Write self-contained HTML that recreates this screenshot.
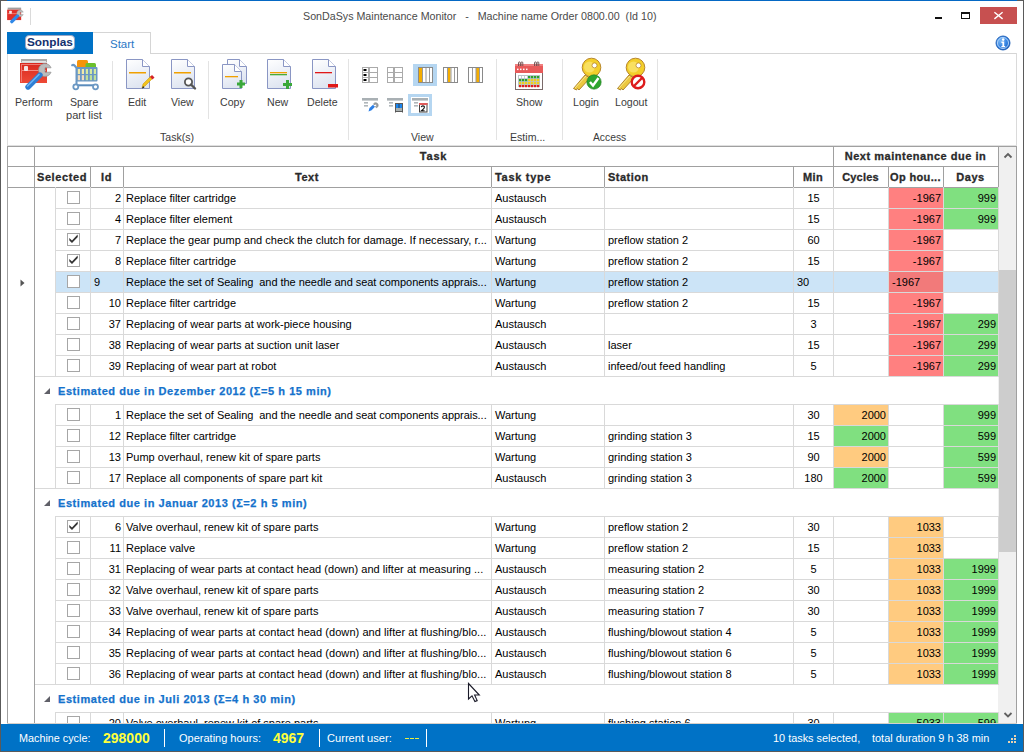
<!DOCTYPE html><html><head><meta charset="utf-8"><style>
html,body{margin:0;padding:0;width:1024px;height:752px;overflow:hidden;background:#fff;}
body{position:relative;font-family:'Liberation Sans',sans-serif;}
div{box-sizing:border-box}
svg{position:absolute;overflow:visible}
</style></head><body>
<div style="position:absolute;left:0px;top:0px;width:1px;height:752px;background:#5a5a5a"></div>
<div style="position:absolute;left:1023px;top:0px;width:1px;height:752px;background:#5a5a5a"></div>
<div style="position:absolute;left:0px;top:0px;width:7px;height:1px;background:#5a5a5a"></div>
<div style="position:absolute;left:7px;top:0px;width:1010px;height:1px;background:#0568c4"></div>
<div style="position:absolute;left:1017px;top:0px;width:7px;height:1px;background:#5a5a5a"></div>
<svg style="left:3.9px;top:5.3px" width="20.8" height="20.8" viewBox="0 0 40 40">
<rect x="7" y="5" width="26" height="4" fill="#a0a0a0"/>
<rect x="6" y="9" width="27" height="20" fill="#e0302a"/>
<rect x="7" y="16" width="25" height="1.5" fill="#f58a80"/>
<rect x="10" y="11" width="5" height="6" rx="1" fill="#f4e4e4"/>
<path d="M37.1 13.8 A6.5 6.5 0 1 0 37.1 18.2 L31 18.2 L31 13.8 Z" fill="#bcbcbc" stroke="#8f8f8f" stroke-width="0.7"/>
<path d="M15 32 L26 21" stroke="#2f88e8" stroke-width="6.5" stroke-linecap="round"/>
</svg>
<div style="position:absolute;left:30px;top:8px;width:1px;height:17px;background:#dadada"></div>
<div style="position:absolute;left:303px;top:6.0px;line-height:20px;font-size:10.7px;font-weight:normal;color:#4a4a4a;white-space:pre;">SonDaSys Maintenance Monitor   -   Machine name Order 0800.00  (Id 10)</div>
<div style="position:absolute;left:935px;top:17px;width:7px;height:2px;background:#111"></div>
<div style="position:absolute;left:961px;top:12px;width:9px;height:7px;border:1px solid #111;border-top-width:2px"></div>
<div style="position:absolute;left:980px;top:7px;width:37px;height:17px;background:#c75050"></div>
<svg style="left:993px;top:11px" width="11" height="10" viewBox="0 0 11 10"><path d="M1.4 1.3 L9.6 7.9 M9.6 1.3 L1.4 7.9" stroke="#fff" stroke-width="1.35"/></svg>
<div style="position:absolute;left:7px;top:32px;width:86px;height:22px;background:#0072c6"></div>
<div style="position:absolute;left:25px;top:35px;width:50px;height:15px;background:#fff;border:1px solid #9aa6c4;border-radius:4px"></div>
<div style="position:absolute;left:27px;top:32.0px;line-height:20px;font-size:11.8px;font-weight:bold;color:#14306e;white-space:pre;">Sonplas</div>
<div style="position:absolute;left:93px;top:32px;width:58px;height:22px;border-top:1px solid #d5d5d5;border-right:1px solid #d5d5d5;background:#fff"></div>
<div style="position:absolute;left:110px;top:34.0px;line-height:20px;font-size:11.5px;font-weight:normal;color:#2b78c6;white-space:pre;">Start</div>
<div style="position:absolute;left:151px;top:53px;width:866px;height:1px;background:#d5d5d5"></div>
<div style="position:absolute;left:7px;top:54px;width:1px;height:92px;background:#dedede"></div>
<div style="position:absolute;left:1016px;top:53px;width:1px;height:93px;background:#dadada"></div>
<div style="position:absolute;left:7px;top:145px;width:1010px;height:1px;background:#e0e0e0"></div>
<svg style="left:995px;top:35px" width="16" height="16" viewBox="0 0 16 16">
<defs><radialGradient id="ig" cx="0.35" cy="0.35" r="0.75"><stop offset="0" stop-color="#7ab8f5"/><stop offset="0.6" stop-color="#2f7fe0"/><stop offset="1" stop-color="#1257b8"/></radialGradient></defs>
<circle cx="8" cy="8" r="7" fill="url(#ig)" stroke="#1d5cb4" stroke-width="0.9"/>
<circle cx="8" cy="8" r="5.5" fill="none" stroke="#c8e4ff" stroke-width="0.9" opacity="0.9"/>
<circle cx="8.2" cy="4.6" r="1.3" fill="#fff"/>
<path d="M6.4 6.6 h2.8 v4.4 h1 v1.3 h-3.8 v-1.3 h1 v-3.1 h-1 z" fill="#fff"/>
</svg>
<svg style="left:14px;top:54px" width="40" height="40" viewBox="0 0 40 40">
<defs><linearGradient id="tb" x1="0" y1="0" x2="0" y2="1"><stop offset="0" stop-color="#d8281f"/><stop offset="1" stop-color="#ee4a36"/></linearGradient></defs>
<rect x="7" y="5" width="26" height="3.5" fill="#a9a9a9"/>
<rect x="8" y="7" width="24" height="1.2" fill="#e4e4e4"/>
<rect x="6" y="9" width="27" height="20" fill="url(#tb)"/>
<rect x="7" y="10" width="25" height="1" fill="#f07a72"/>
<rect x="7" y="16" width="25" height="1" fill="#f58a80"/>
<rect x="7" y="10" width="1" height="18" fill="#f07a72"/>
<rect x="10" y="12" width="4" height="5" rx="1" fill="#f4e4e4"/>
<path d="M37.1 13.8 A6.5 6.5 0 1 0 37.1 18.2 L31 18.2 L31 13.8 Z" fill="#bcbcbc" stroke="#8f8f8f" stroke-width="0.7"/>
<path d="M14 33 L26 21" stroke="#2f7fd4" stroke-width="5.4" stroke-linecap="round"/>
<path d="M13.5 32 L25 20.5" stroke="#6cb4f4" stroke-width="1.6" stroke-linecap="round"/>
</svg>
<div style="position:absolute;left:15px;top:92.0px;line-height:20px;font-size:10.6px;font-weight:normal;color:#3c3c3c;white-space:pre;">Perform</div>
<svg style="left:70px;top:59px" width="30" height="32" viewBox="0 0 30 32">
<rect x="7" y="1" width="11" height="9" rx="1.5" fill="#f7930a"/>
<rect x="15.5" y="4" width="10.5" height="6" rx="1.5" fill="#6cc02c"/>
<path d="M2.2 6.2 Q3.5 5.5 5 7 L6 8.2" fill="none" stroke="#6b98c4" stroke-width="2.2" stroke-linecap="round"/>
<rect x="5.5" y="8" width="22" height="14.5" rx="1" fill="#6b98c4"/>
<g fill="#f3eaa8"><rect x="7.8" y="10" width="2.2" height="5"/><rect x="11.8" y="10" width="2.2" height="5"/></g>
<g fill="#d6eba0"><rect x="15.8" y="10" width="2.2" height="5"/><rect x="19.8" y="10" width="2.2" height="5"/><rect x="23.8" y="10" width="2.2" height="5"/></g>
<g fill="#f0dcc0"><rect x="7.8" y="16.2" width="2.2" height="5"/><rect x="11.8" y="16.2" width="2.2" height="5"/></g>
<g fill="#bfe09a"><rect x="15.8" y="16.2" width="2.2" height="5"/><rect x="19.8" y="16.2" width="2.2" height="5"/><rect x="23.8" y="16.2" width="2.2" height="5"/></g>
<rect x="5.5" y="22" width="2" height="4" fill="#6b98c4"/>
<rect x="5.5" y="25.3" width="20" height="2" fill="#5b8cbc"/>
<circle cx="5.8" cy="27.8" r="2.5" fill="#fff" stroke="#6b98c4" stroke-width="1.8"/>
<circle cx="25.5" cy="27.8" r="2.5" fill="#fff" stroke="#6b98c4" stroke-width="1.8"/>
</svg>
<div style="position:absolute;left:70px;top:92.0px;line-height:20px;font-size:10.6px;font-weight:normal;color:#3c3c3c;white-space:pre;">Spare</div>
<div style="position:absolute;left:66px;top:105.0px;line-height:20px;font-size:11.1px;font-weight:normal;color:#3c3c3c;white-space:pre;">part list</div>
<div style="position:absolute;left:112px;top:61px;width:1px;height:59px;background:#e3e3e3"></div>
<svg style="left:0;top:0" width="1" height="1"><defs><linearGradient id="pg" x1="0" y1="0" x2="0.3" y2="1"><stop offset="0" stop-color="#ffffff"/><stop offset="1" stop-color="#dfe5f1"/></linearGradient></defs></svg>
<svg style="left:0;top:0" width="1024" height="100"><path d="M126.5 59.5 h16 l7 7 v22 h-23 z" fill="url(#pg)" stroke="#8a96c4" stroke-width="1"/>
<path d="M142.5 59.5 v7 h7" fill="#fff" stroke="#8a96c4" stroke-width="1"/><rect x="129" y="72" width="17" height="1.5" fill="#f0a000"/><path d="M142 88 L143 84 L151 76 L153 78 L145 86 z" fill="#f2c21c" stroke="#c89400" stroke-width="0.5"/><path d="M150 77 L152 75 L154.5 77.5 L152.5 79.5 z" fill="#d5222a"/><path d="M142 88.5 L143 86 L144.5 87.5 z" fill="#222"/><path d="M171.5 59.5 h16 l7 7 v22 h-23 z" fill="url(#pg)" stroke="#8a96c4" stroke-width="1"/>
<path d="M187.5 59.5 v7 h7" fill="#fff" stroke="#8a96c4" stroke-width="1"/><rect x="174" y="72" width="17" height="1.5" fill="#f0a000"/><circle cx="188.5" cy="82" r="3.6" fill="#fff" stroke="#555" stroke-width="1.8"/><path d="M191 84.5 L195 88.5" stroke="#555" stroke-width="2.4" stroke-linecap="round"/><path d="M227.5 59.5 h12 l7 7 v17 h-19 z" fill="url(#pg)" stroke="#8a96c4" stroke-width="1"/>
<path d="M239.5 59.5 v7 h7" fill="#fff" stroke="#8a96c4" stroke-width="1"/><path d="M222.5 64.5 h12 l7 7 v17 h-19 z" fill="url(#pg)" stroke="#8a96c4" stroke-width="1"/>
<path d="M234.5 64.5 v7 h7" fill="#fff" stroke="#8a96c4" stroke-width="1"/><rect x="225" y="76" width="13" height="1.3" fill="#f0a000"/><path d="M241 80 v8 M237 84 h8" stroke="#3aa83a" stroke-width="3"/><path d="M267.5 59.5 h16 l7 7 v22 h-23 z" fill="url(#pg)" stroke="#8a96c4" stroke-width="1"/>
<path d="M283.5 59.5 v7 h7" fill="#fff" stroke="#8a96c4" stroke-width="1"/><rect x="270" y="72" width="17" height="1.3" fill="#f0a000"/><rect x="270" y="74" width="17" height="1.3" fill="#48ab3a"/><path d="M287.5 80 v9 M283 84.5 h9" stroke="#3aa83a" stroke-width="3"/><path d="M312.5 59.5 h16 l7 7 v22 h-23 z" fill="url(#pg)" stroke="#8a96c4" stroke-width="1"/>
<path d="M328.5 59.5 v7 h7" fill="#fff" stroke="#8a96c4" stroke-width="1"/><rect x="315" y="72" width="17" height="1.3" fill="#e01818"/><rect x="328" y="84" width="10" height="3.5" fill="#e01818"/></svg>
<div style="position:absolute;left:128px;top:92.0px;line-height:20px;font-size:10.6px;font-weight:normal;color:#3c3c3c;white-space:pre;">Edit</div>
<div style="position:absolute;left:171px;top:92.0px;line-height:20px;font-size:10.6px;font-weight:normal;color:#3c3c3c;white-space:pre;">View</div>
<div style="position:absolute;left:208px;top:61px;width:1px;height:58px;background:#e3e3e3"></div>
<div style="position:absolute;left:220px;top:92.0px;line-height:20px;font-size:10.6px;font-weight:normal;color:#3c3c3c;white-space:pre;">Copy</div>
<div style="position:absolute;left:267px;top:92.0px;line-height:20px;font-size:10.6px;font-weight:normal;color:#3c3c3c;white-space:pre;">New</div>
<div style="position:absolute;left:307px;top:92.0px;line-height:20px;font-size:10.6px;font-weight:normal;color:#3c3c3c;white-space:pre;">Delete</div>
<div style="position:absolute;left:160px;top:127.0px;line-height:20px;font-size:10.6px;font-weight:normal;color:#3c3c3c;white-space:pre;">Task(s)</div>
<div style="position:absolute;left:348px;top:59px;width:1px;height:81px;background:#e3e3e3"></div>
<svg style="left:0;top:0" width="1024" height="130"><rect x="413" y="64" width="24" height="22" fill="#b5d6f1"/><rect x="408" y="94" width="24" height="22" fill="#b5d6f1"/><rect x="362.5" y="67.5" width="6" height="5" fill="#fff" stroke="#aaa" stroke-width="1"/><rect x="369.5" y="67.5" width="8" height="5" fill="#fff" stroke="#aaa" stroke-width="1"/><rect x="363.5" y="69" width="3" height="2" fill="#000"/><rect x="362.5" y="72.5" width="6" height="5" fill="#fff" stroke="#aaa" stroke-width="1"/><rect x="369.5" y="72.5" width="8" height="5" fill="#fff" stroke="#aaa" stroke-width="1"/><rect x="363.5" y="74" width="3" height="2" fill="#000"/><rect x="362.5" y="77.5" width="6" height="5" fill="#fff" stroke="#aaa" stroke-width="1"/><rect x="369.5" y="77.5" width="8" height="5" fill="#fff" stroke="#aaa" stroke-width="1"/><rect x="363.5" y="79" width="3" height="2" fill="#000"/><rect x="387.5" y="67.5" width="6" height="5" fill="#fff" stroke="#aaa" stroke-width="1"/><rect x="394.5" y="67.5" width="8" height="5" fill="#fff" stroke="#aaa" stroke-width="1"/><rect x="387.5" y="72.5" width="6" height="5" fill="#fff" stroke="#aaa" stroke-width="1"/><rect x="394.5" y="72.5" width="8" height="5" fill="#fff" stroke="#aaa" stroke-width="1"/><rect x="387.5" y="77.5" width="6" height="5" fill="#fff" stroke="#aaa" stroke-width="1"/><rect x="394.5" y="77.5" width="8" height="5" fill="#fff" stroke="#aaa" stroke-width="1"/><rect x="418.5" y="67.5" width="14" height="15" fill="#fff" stroke="#8a8a8a" stroke-width="1"/><rect x="419" y="68" width="3" height="14" fill="#f5ad00"/><rect x="422.0" y="68" width="1" height="14" fill="#9a9a9a"/><rect x="425.5" y="68" width="1" height="14" fill="#9a9a9a"/><rect x="429.0" y="68" width="1" height="14" fill="#9a9a9a"/><rect x="443.5" y="67.5" width="14" height="15" fill="#fff" stroke="#8a8a8a" stroke-width="1"/><rect x="447.5" y="68" width="3" height="14" fill="#f5ad00"/><rect x="447.0" y="68" width="1" height="14" fill="#9a9a9a"/><rect x="450.5" y="68" width="1" height="14" fill="#9a9a9a"/><rect x="454.0" y="68" width="1" height="14" fill="#9a9a9a"/><rect x="468.5" y="67.5" width="14" height="15" fill="#fff" stroke="#8a8a8a" stroke-width="1"/><rect x="476" y="68" width="3" height="14" fill="#f5ad00"/><rect x="472.0" y="68" width="1" height="14" fill="#9a9a9a"/><rect x="475.5" y="68" width="1" height="14" fill="#9a9a9a"/><rect x="479.0" y="68" width="1" height="14" fill="#9a9a9a"/><rect x="362" y="98" width="16" height="2.6" fill="#a9b0b4"/><rect x="364" y="102" width="4" height="1.6" fill="#b0b6ba"/><rect x="364" y="105" width="4" height="1.6" fill="#b0b6ba"/><path d="M368.5 111.5 L369.5 108 L373 104.8 L375 106.8 L371.6 110.2 z" fill="#2b7fe6"/><path d="M373.5 103.8 a2.6 2.6 0 1 1 2.8 4 l-1 -1.2 a1.2 1.2 0 1 0 -1 -1.6 z" fill="#9aa0a4" stroke="#777" stroke-width="0.5"/><rect x="387" y="98" width="16" height="2.6" fill="#a9b0b4"/><rect x="389" y="102" width="4" height="1.6" fill="#b0b6ba"/><rect x="389" y="105" width="4" height="1.6" fill="#b0b6ba"/><rect x="395.5" y="103.5" width="7" height="8" fill="#a8b0b0" stroke="#5a5a5a" stroke-width="1"/><rect x="396" y="104" width="6" height="4" fill="#1a86f0"/><rect x="398.6" y="104" width="0.8" height="4" fill="#333"/><rect x="395" y="111" width="1" height="1.5" fill="#555"/><rect x="402" y="111" width="1" height="1.5" fill="#555"/><rect x="411" y="97" width="18" height="16" fill="#fff"/><rect x="412" y="98" width="16" height="2.6" fill="#a9b0b4"/><rect x="414" y="102" width="4" height="1.6" fill="#b0b6ba"/><rect x="414" y="105" width="4" height="1.6" fill="#b0b6ba"/><rect x="419.5" y="103.5" width="7.5" height="8.5" fill="#fff" stroke="#444" stroke-width="1"/><rect x="419" y="103" width="8.5" height="2" fill="#e05a5a"/><path d="M421.3 107.2 q0.2 -1.3 1.6 -1.3 q1.6 0 1.5 1.4 q-0.1 0.9 -1.4 2 l-1.6 1.5 h3.2" fill="none" stroke="#111" stroke-width="1.1"/></svg>
<div style="position:absolute;left:411px;top:127.0px;line-height:20px;font-size:10.6px;font-weight:normal;color:#3c3c3c;white-space:pre;">View</div>
<div style="position:absolute;left:496px;top:59px;width:1px;height:81px;background:#e3e3e3"></div>
<svg style="left:514px;top:60px" width="30" height="31" viewBox="0 0 30 31"><rect x="1.5" y="4.5" width="27" height="25" fill="#fff" stroke="#7a6a6a" stroke-width="1"/><rect x="1" y="4" width="28" height="9" fill="#e85a5a"/><rect x="1" y="4" width="28" height="2" fill="#f08080"/><g fill="none" stroke="#6a4a4a" stroke-width="0.9"><path d="M4.5 6 v-3.2 a0.9 0.9 0 0 1 1.8 0 v3.2"/><path d="M7 6 v-3.2 a0.9 0.9 0 0 1 1.8 0 v3.2"/><path d="M20.5 6 v-3.2 a0.9 0.9 0 0 1 1.8 0 v3.2"/><path d="M23 6 v-3.2 a0.9 0.9 0 0 1 1.8 0 v3.2"/></g><g fill="#fff"><rect x="3" y="8.6" width="1.5" height="1.5"/><rect x="6" y="8.6" width="1.5" height="1.5"/><rect x="9" y="8.6" width="1.5" height="1.5"/><rect x="12" y="8.6" width="1.5" height="1.5"/></g><rect x="4" y="15" width="22" height="12" fill="#b9c4c8"/><rect x="5" y="16" width="2.2" height="2.2" fill="#ffffff"/><rect x="8" y="16" width="2.2" height="2.2" fill="#ffffff"/><rect x="11" y="16" width="2.2" height="2.2" fill="#ffffff"/><rect x="14" y="16" width="2.2" height="2.2" fill="#2ba12b"/><rect x="17" y="16" width="2.2" height="2.2" fill="#2ba12b"/><rect x="20" y="16" width="2.2" height="2.2" fill="#2ba12b"/><rect x="23" y="16" width="2.2" height="2.2" fill="#2ba12b"/><rect x="5" y="19" width="2.2" height="2.2" fill="#2ba12b"/><rect x="8" y="19" width="2.2" height="2.2" fill="#2ba12b"/><rect x="11" y="19" width="2.2" height="2.2" fill="#2ba12b"/><rect x="14" y="19" width="2.2" height="2.2" fill="#f2d01a"/><rect x="17" y="19" width="2.2" height="2.2" fill="#f2d01a"/><rect x="20" y="19" width="2.2" height="2.2" fill="#f2d01a"/><rect x="23" y="19" width="2.2" height="2.2" fill="#f2d01a"/><rect x="5" y="22" width="2.2" height="2.2" fill="#f2d01a"/><rect x="8" y="22" width="2.2" height="2.2" fill="#f2d01a"/><rect x="11" y="22" width="2.2" height="2.2" fill="#f2d01a"/><rect x="14" y="22" width="2.2" height="2.2" fill="#f2d01a"/><rect x="17" y="22" width="2.2" height="2.2" fill="#f2d01a"/><rect x="20" y="22" width="2.2" height="2.2" fill="#f2d01a"/><rect x="23" y="22" width="2.2" height="2.2" fill="#f2d01a"/><rect x="5" y="25" width="2.2" height="2.2" fill="#e21c1c"/><rect x="8" y="25" width="2.2" height="2.2" fill="#e21c1c"/><rect x="11" y="25" width="2.2" height="2.2" fill="#e21c1c"/><rect x="14" y="25" width="2.2" height="2.2" fill="#e21c1c"/><rect x="17" y="25" width="2.2" height="2.2" fill="#e21c1c"/><rect x="20" y="25" width="2.2" height="2.2" fill="#e21c1c"/><rect x="23" y="25" width="2.2" height="2.2" fill="#e21c1c"/></svg>
<div style="position:absolute;left:516px;top:92.0px;line-height:20px;font-size:10.6px;font-weight:normal;color:#3c3c3c;white-space:pre;">Show</div>
<div style="position:absolute;left:510px;top:127.0px;line-height:20px;font-size:10.6px;font-weight:normal;color:#3c3c3c;white-space:pre;">Estim...</div>
<div style="position:absolute;left:562px;top:59px;width:1px;height:81px;background:#e3e3e3"></div>
<svg style="left:571px;top:58px" width="34" height="34" viewBox="0 0 34 34"><path d="M2.5 30.5 L14 17 L19 20 L8 32 L6.5 30.5 L5.5 32 z" fill="#ecc840" stroke="#a87a22" stroke-width="0.9"/><path d="M4 30 L15 18" stroke="#f8e890" stroke-width="1"/><circle cx="20.5" cy="9.5" r="9.3" fill="#f3cf2a" stroke="#b8862a" stroke-width="1"/><circle cx="18.5" cy="9" r="5.5" fill="#f9e060"/><circle cx="23.5" cy="7.4" r="2.5" fill="#fff" stroke="#b8862a" stroke-width="0.8"/><circle cx="23" cy="24" r="7.2" fill="#2ea52e" stroke="#1e7a1e" stroke-width="0.6"/><path d="M19 24 L22 27.5 L27.5 20" fill="none" stroke="#fff" stroke-width="2.4"/></svg>
<svg style="left:615px;top:58px" width="34" height="34" viewBox="0 0 34 34"><path d="M2.5 30.5 L14 17 L19 20 L8 32 L6.5 30.5 L5.5 32 z" fill="#ecc840" stroke="#a87a22" stroke-width="0.9"/><path d="M4 30 L15 18" stroke="#f8e890" stroke-width="1"/><circle cx="20.5" cy="9.5" r="9.3" fill="#f3cf2a" stroke="#b8862a" stroke-width="1"/><circle cx="18.5" cy="9" r="5.5" fill="#f9e060"/><circle cx="23.5" cy="7.4" r="2.5" fill="#fff" stroke="#b8862a" stroke-width="0.8"/><circle cx="23" cy="24" r="6.3" fill="#fff" stroke="#dd1c1c" stroke-width="2.4"/><path d="M19 28 L27 20" stroke="#dd1c1c" stroke-width="2.4"/></svg>
<div style="position:absolute;left:573px;top:92.0px;line-height:20px;font-size:10.6px;font-weight:normal;color:#3c3c3c;white-space:pre;">Login</div>
<div style="position:absolute;left:615px;top:92.0px;line-height:20px;font-size:10.6px;font-weight:normal;color:#3c3c3c;white-space:pre;">Logout</div>
<div style="position:absolute;left:593px;top:127.5px;line-height:20px;font-size:10.3px;font-weight:normal;color:#3c3c3c;white-space:pre;">Access</div>
<div style="position:absolute;left:657px;top:59px;width:1px;height:81px;background:#e3e3e3"></div>
<div style="position:absolute;left:998px;top:146px;width:19px;height:578px;background:#f0f0f0"></div>
<div style="position:absolute;left:999px;top:270px;width:17px;height:282px;background:#cdcdcd"></div>
<div style="position:absolute;left:1016px;top:146px;width:1px;height:578px;background:#a0a0a0"></div>
<svg style="left:1003px;top:151px" width="10" height="8" viewBox="0 0 10 8"><path d="M1.5 6.5 L5 3 L8.5 6.5" fill="none" stroke="#606060" stroke-width="1.8"/></svg>
<svg style="left:1003px;top:711px" width="10" height="8" viewBox="0 0 10 8"><path d="M1.5 2 L5 5.5 L8.5 2" fill="none" stroke="#606060" stroke-width="1.8"/></svg>
<div style="position:absolute;left:7px;top:146px;width:1010px;height:1px;background:#a0a0a0"></div>
<div style="position:absolute;left:7px;top:166px;width:992px;height:1px;background:#a0a0a0"></div>
<div style="position:absolute;left:7px;top:187px;width:992px;height:1px;background:#a0a0a0"></div>
<div style="position:absolute;left:7px;top:146px;width:1px;height:578px;background:#a0a0a0"></div>
<div style="position:absolute;left:34px;top:146px;width:1px;height:578px;background:#a0a0a0"></div>
<div style="position:absolute;left:833px;top:146px;width:1px;height:42px;background:#a0a0a0"></div>
<div style="position:absolute;left:998px;top:146px;width:1px;height:42px;background:#a0a0a0"></div>
<div style="position:absolute;left:90px;top:166px;width:1px;height:22px;background:#a0a0a0"></div>
<div style="position:absolute;left:123px;top:166px;width:1px;height:22px;background:#a0a0a0"></div>
<div style="position:absolute;left:491px;top:166px;width:1px;height:22px;background:#a0a0a0"></div>
<div style="position:absolute;left:604px;top:166px;width:1px;height:22px;background:#a0a0a0"></div>
<div style="position:absolute;left:793px;top:166px;width:1px;height:22px;background:#a0a0a0"></div>
<div style="position:absolute;left:888px;top:166px;width:1px;height:22px;background:#a0a0a0"></div>
<div style="position:absolute;left:943px;top:166px;width:1px;height:22px;background:#a0a0a0"></div>
<div style="position:absolute;left:34px;top:146.0px;width:799px;text-align:center;line-height:20px;font-size:11px;font-weight:bold;color:#2a2a2a;white-space:pre;letter-spacing:0.75px;-webkit-text-stroke:0.3px #2a2a2a">Task</div>
<div style="position:absolute;left:833px;top:146.0px;width:165px;text-align:center;line-height:20px;font-size:11px;font-weight:bold;color:#2a2a2a;white-space:pre;letter-spacing:0.52px;-webkit-text-stroke:0.3px #2a2a2a">Next maintenance due in</div>
<div style="position:absolute;left:34px;top:167.0px;width:56px;text-align:center;line-height:20px;font-size:11px;font-weight:bold;color:#2a2a2a;white-space:pre;letter-spacing:0.6px;-webkit-text-stroke:0.3px #2a2a2a">Selected</div>
<div style="position:absolute;left:90px;top:167.0px;width:33px;text-align:center;line-height:20px;font-size:11px;font-weight:bold;color:#2a2a2a;white-space:pre;letter-spacing:0.5px;-webkit-text-stroke:0.3px #2a2a2a">Id</div>
<div style="position:absolute;left:123px;top:167.0px;width:368px;text-align:center;line-height:20px;font-size:11px;font-weight:bold;color:#2a2a2a;white-space:pre;letter-spacing:0.5px;-webkit-text-stroke:0.3px #2a2a2a">Text</div>
<div style="position:absolute;left:495px;top:167.0px;line-height:20px;font-size:11px;font-weight:bold;color:#2a2a2a;white-space:pre;letter-spacing:0.7px;-webkit-text-stroke:0.3px #2a2a2a">Task type</div>
<div style="position:absolute;left:608px;top:167.0px;line-height:20px;font-size:11px;font-weight:bold;color:#2a2a2a;white-space:pre;letter-spacing:0.5px;-webkit-text-stroke:0.3px #2a2a2a">Station</div>
<div style="position:absolute;left:793px;top:167.0px;width:40px;text-align:center;line-height:20px;font-size:11px;font-weight:bold;color:#2a2a2a;white-space:pre;letter-spacing:0.3px;-webkit-text-stroke:0.3px #2a2a2a">Min</div>
<div style="position:absolute;left:833px;top:167.0px;width:55px;text-align:center;line-height:20px;font-size:11px;font-weight:bold;color:#2a2a2a;white-space:pre;letter-spacing:0.2px;-webkit-text-stroke:0.3px #2a2a2a">Cycles</div>
<div style="position:absolute;left:888px;top:167.0px;width:55px;text-align:center;line-height:20px;font-size:11px;font-weight:bold;color:#2a2a2a;white-space:pre;letter-spacing:0.35px;-webkit-text-stroke:0.3px #2a2a2a">Op hou...</div>
<div style="position:absolute;left:943px;top:167.0px;width:55px;text-align:center;line-height:20px;font-size:11px;font-weight:bold;color:#2a2a2a;white-space:pre;letter-spacing:0.5px;-webkit-text-stroke:0.3px #2a2a2a">Days</div>
<div style="position:absolute;left:0;top:0;width:1024px;height:723px;overflow:hidden">
<div style="position:absolute;left:889px;top:188px;width:54px;height:20px;background:#ff8080"></div>
<div style="position:absolute;left:944px;top:188px;width:54px;height:20px;background:#80e080"></div>
<div style="position:absolute;left:55px;top:187px;width:1px;height:22px;background:#d9d9d9"></div>
<div style="position:absolute;left:90px;top:187px;width:1px;height:22px;background:#d9d9d9"></div>
<div style="position:absolute;left:123px;top:187px;width:1px;height:22px;background:#d9d9d9"></div>
<div style="position:absolute;left:491px;top:187px;width:1px;height:22px;background:#d9d9d9"></div>
<div style="position:absolute;left:604px;top:187px;width:1px;height:22px;background:#d9d9d9"></div>
<div style="position:absolute;left:793px;top:187px;width:1px;height:22px;background:#d9d9d9"></div>
<div style="position:absolute;left:833px;top:187px;width:1px;height:22px;background:#d9d9d9"></div>
<div style="position:absolute;left:888px;top:187px;width:1px;height:22px;background:#d9d9d9"></div>
<div style="position:absolute;left:943px;top:187px;width:1px;height:22px;background:#d9d9d9"></div>
<div style="position:absolute;left:998px;top:187px;width:1px;height:22px;background:#d9d9d9"></div>
<div style="position:absolute;left:55px;top:208px;width:944px;height:1px;background:#d9d9d9"></div>
<div style="position:absolute;left:67px;top:191px;width:13px;height:13px;background:#fff;border:1px solid #a6a6a6"></div>
<div style="position:absolute;left:90px;top:188.0px;width:31px;text-align:right;line-height:20px;font-size:11px;font-weight:normal;color:#000000;white-space:pre;">2</div>
<div style="position:absolute;left:793px;top:188.0px;width:41px;text-align:center;line-height:20px;font-size:11px;font-weight:normal;color:#000000;white-space:pre;">15</div>
<div style="position:absolute;left:888px;top:188.0px;width:53px;text-align:right;line-height:20px;font-size:11px;font-weight:normal;color:#000000;white-space:pre;">-1967</div>
<div style="position:absolute;left:126px;top:188.0px;line-height:20px;font-size:11px;font-weight:normal;color:#000000;white-space:pre;">Replace filter cartridge</div>
<div style="position:absolute;left:495px;top:188.0px;line-height:20px;font-size:11px;font-weight:normal;color:#000000;white-space:pre;">Austausch</div>
<div style="position:absolute;left:608px;top:188.0px;line-height:20px;font-size:11px;font-weight:normal;color:#000000;white-space:pre;"></div>
<div style="position:absolute;left:943px;top:188.0px;width:53px;text-align:right;line-height:20px;font-size:11px;font-weight:normal;color:#000000;white-space:pre;">999</div>
<div style="position:absolute;left:889px;top:209px;width:54px;height:20px;background:#ff8080"></div>
<div style="position:absolute;left:944px;top:209px;width:54px;height:20px;background:#80e080"></div>
<div style="position:absolute;left:55px;top:208px;width:1px;height:22px;background:#d9d9d9"></div>
<div style="position:absolute;left:90px;top:208px;width:1px;height:22px;background:#d9d9d9"></div>
<div style="position:absolute;left:123px;top:208px;width:1px;height:22px;background:#d9d9d9"></div>
<div style="position:absolute;left:491px;top:208px;width:1px;height:22px;background:#d9d9d9"></div>
<div style="position:absolute;left:604px;top:208px;width:1px;height:22px;background:#d9d9d9"></div>
<div style="position:absolute;left:793px;top:208px;width:1px;height:22px;background:#d9d9d9"></div>
<div style="position:absolute;left:833px;top:208px;width:1px;height:22px;background:#d9d9d9"></div>
<div style="position:absolute;left:888px;top:208px;width:1px;height:22px;background:#d9d9d9"></div>
<div style="position:absolute;left:943px;top:208px;width:1px;height:22px;background:#d9d9d9"></div>
<div style="position:absolute;left:998px;top:208px;width:1px;height:22px;background:#d9d9d9"></div>
<div style="position:absolute;left:55px;top:229px;width:944px;height:1px;background:#d9d9d9"></div>
<div style="position:absolute;left:67px;top:212px;width:13px;height:13px;background:#fff;border:1px solid #a6a6a6"></div>
<div style="position:absolute;left:90px;top:209.0px;width:31px;text-align:right;line-height:20px;font-size:11px;font-weight:normal;color:#000000;white-space:pre;">4</div>
<div style="position:absolute;left:793px;top:209.0px;width:41px;text-align:center;line-height:20px;font-size:11px;font-weight:normal;color:#000000;white-space:pre;">15</div>
<div style="position:absolute;left:888px;top:209.0px;width:53px;text-align:right;line-height:20px;font-size:11px;font-weight:normal;color:#000000;white-space:pre;">-1967</div>
<div style="position:absolute;left:126px;top:209.0px;line-height:20px;font-size:11px;font-weight:normal;color:#000000;white-space:pre;">Replace filter element</div>
<div style="position:absolute;left:495px;top:209.0px;line-height:20px;font-size:11px;font-weight:normal;color:#000000;white-space:pre;">Austausch</div>
<div style="position:absolute;left:608px;top:209.0px;line-height:20px;font-size:11px;font-weight:normal;color:#000000;white-space:pre;"></div>
<div style="position:absolute;left:943px;top:209.0px;width:53px;text-align:right;line-height:20px;font-size:11px;font-weight:normal;color:#000000;white-space:pre;">999</div>
<div style="position:absolute;left:889px;top:230px;width:54px;height:20px;background:#ff8080"></div>
<div style="position:absolute;left:55px;top:229px;width:1px;height:22px;background:#d9d9d9"></div>
<div style="position:absolute;left:90px;top:229px;width:1px;height:22px;background:#d9d9d9"></div>
<div style="position:absolute;left:123px;top:229px;width:1px;height:22px;background:#d9d9d9"></div>
<div style="position:absolute;left:491px;top:229px;width:1px;height:22px;background:#d9d9d9"></div>
<div style="position:absolute;left:604px;top:229px;width:1px;height:22px;background:#d9d9d9"></div>
<div style="position:absolute;left:793px;top:229px;width:1px;height:22px;background:#d9d9d9"></div>
<div style="position:absolute;left:833px;top:229px;width:1px;height:22px;background:#d9d9d9"></div>
<div style="position:absolute;left:888px;top:229px;width:1px;height:22px;background:#d9d9d9"></div>
<div style="position:absolute;left:943px;top:229px;width:1px;height:22px;background:#d9d9d9"></div>
<div style="position:absolute;left:998px;top:229px;width:1px;height:22px;background:#d9d9d9"></div>
<div style="position:absolute;left:55px;top:250px;width:944px;height:1px;background:#d9d9d9"></div>
<div style="position:absolute;left:67px;top:233px;width:13px;height:13px;background:#fff;border:1px solid #a6a6a6"></div>
<svg style="left:67px;top:233px" width="13" height="13" viewBox="0 0 13 13"><path d="M2.2 5 L2.4 7.6 L5 10 L10.8 4 L10.6 1.6 L5 7.4 z" fill="#333"/></svg>
<div style="position:absolute;left:90px;top:230.0px;width:31px;text-align:right;line-height:20px;font-size:11px;font-weight:normal;color:#000000;white-space:pre;">7</div>
<div style="position:absolute;left:793px;top:230.0px;width:41px;text-align:center;line-height:20px;font-size:11px;font-weight:normal;color:#000000;white-space:pre;">60</div>
<div style="position:absolute;left:888px;top:230.0px;width:53px;text-align:right;line-height:20px;font-size:11px;font-weight:normal;color:#000000;white-space:pre;">-1967</div>
<div style="position:absolute;left:126px;top:230.0px;line-height:20px;font-size:11px;font-weight:normal;color:#000000;white-space:pre;letter-spacing:0.02px">Replace the gear pump and check the clutch for damage. If necessary, r...</div>
<div style="position:absolute;left:495px;top:230.0px;line-height:20px;font-size:11px;font-weight:normal;color:#000000;white-space:pre;">Wartung</div>
<div style="position:absolute;left:608px;top:230.0px;line-height:20px;font-size:11px;font-weight:normal;color:#000000;white-space:pre;">preflow station 2</div>
<div style="position:absolute;left:889px;top:251px;width:54px;height:20px;background:#ff8080"></div>
<div style="position:absolute;left:55px;top:250px;width:1px;height:22px;background:#d9d9d9"></div>
<div style="position:absolute;left:90px;top:250px;width:1px;height:22px;background:#d9d9d9"></div>
<div style="position:absolute;left:123px;top:250px;width:1px;height:22px;background:#d9d9d9"></div>
<div style="position:absolute;left:491px;top:250px;width:1px;height:22px;background:#d9d9d9"></div>
<div style="position:absolute;left:604px;top:250px;width:1px;height:22px;background:#d9d9d9"></div>
<div style="position:absolute;left:793px;top:250px;width:1px;height:22px;background:#d9d9d9"></div>
<div style="position:absolute;left:833px;top:250px;width:1px;height:22px;background:#d9d9d9"></div>
<div style="position:absolute;left:888px;top:250px;width:1px;height:22px;background:#d9d9d9"></div>
<div style="position:absolute;left:943px;top:250px;width:1px;height:22px;background:#d9d9d9"></div>
<div style="position:absolute;left:998px;top:250px;width:1px;height:22px;background:#d9d9d9"></div>
<div style="position:absolute;left:55px;top:271px;width:944px;height:1px;background:#d9d9d9"></div>
<div style="position:absolute;left:67px;top:254px;width:13px;height:13px;background:#fff;border:1px solid #a6a6a6"></div>
<svg style="left:67px;top:254px" width="13" height="13" viewBox="0 0 13 13"><path d="M2.2 5 L2.4 7.6 L5 10 L10.8 4 L10.6 1.6 L5 7.4 z" fill="#333"/></svg>
<div style="position:absolute;left:90px;top:251.0px;width:31px;text-align:right;line-height:20px;font-size:11px;font-weight:normal;color:#000000;white-space:pre;">8</div>
<div style="position:absolute;left:793px;top:251.0px;width:41px;text-align:center;line-height:20px;font-size:11px;font-weight:normal;color:#000000;white-space:pre;">15</div>
<div style="position:absolute;left:888px;top:251.0px;width:53px;text-align:right;line-height:20px;font-size:11px;font-weight:normal;color:#000000;white-space:pre;">-1967</div>
<div style="position:absolute;left:126px;top:251.0px;line-height:20px;font-size:11px;font-weight:normal;color:#000000;white-space:pre;">Replace filter cartridge</div>
<div style="position:absolute;left:495px;top:251.0px;line-height:20px;font-size:11px;font-weight:normal;color:#000000;white-space:pre;">Wartung</div>
<div style="position:absolute;left:608px;top:251.0px;line-height:20px;font-size:11px;font-weight:normal;color:#000000;white-space:pre;">preflow station 2</div>
<div style="position:absolute;left:56px;top:272px;width:942px;height:20px;background:#cce4f7"></div>
<svg style="left:20px;top:279px" width="5" height="8" viewBox="0 0 5 8"><path d="M0.5 0.5 L4.5 4 L0.5 7.5 z" fill="#555"/></svg>
<div style="position:absolute;left:889px;top:272px;width:54px;height:20px;background:#f27a7a"></div>
<div style="position:absolute;left:55px;top:271px;width:1px;height:22px;background:#d9d9d9"></div>
<div style="position:absolute;left:90px;top:271px;width:1px;height:22px;background:#d9d9d9"></div>
<div style="position:absolute;left:123px;top:271px;width:1px;height:22px;background:#d9d9d9"></div>
<div style="position:absolute;left:491px;top:271px;width:1px;height:22px;background:#d9d9d9"></div>
<div style="position:absolute;left:604px;top:271px;width:1px;height:22px;background:#d9d9d9"></div>
<div style="position:absolute;left:793px;top:271px;width:1px;height:22px;background:#d9d9d9"></div>
<div style="position:absolute;left:833px;top:271px;width:1px;height:22px;background:#d9d9d9"></div>
<div style="position:absolute;left:888px;top:271px;width:1px;height:22px;background:#d9d9d9"></div>
<div style="position:absolute;left:943px;top:271px;width:1px;height:22px;background:#d9d9d9"></div>
<div style="position:absolute;left:998px;top:271px;width:1px;height:22px;background:#d9d9d9"></div>
<div style="position:absolute;left:55px;top:292px;width:944px;height:1px;background:#d9d9d9"></div>
<div style="position:absolute;left:67px;top:275px;width:13px;height:13px;background:#fff;border:1px solid #a6a6a6"></div>
<div style="position:absolute;left:94px;top:272.0px;line-height:20px;font-size:11px;font-weight:normal;color:#000000;white-space:pre;">9</div>
<div style="position:absolute;left:797px;top:272.0px;line-height:20px;font-size:11px;font-weight:normal;color:#000000;white-space:pre;">30</div>
<div style="position:absolute;left:892px;top:272.0px;line-height:20px;font-size:11px;font-weight:normal;color:#000000;white-space:pre;">-1967</div>
<div style="position:absolute;left:126px;top:272.0px;line-height:20px;font-size:11px;font-weight:normal;color:#000000;white-space:pre;letter-spacing:-0.044px">Replace the set of Sealing  and the needle and seat components apprais...</div>
<div style="position:absolute;left:495px;top:272.0px;line-height:20px;font-size:11px;font-weight:normal;color:#000000;white-space:pre;">Wartung</div>
<div style="position:absolute;left:608px;top:272.0px;line-height:20px;font-size:11px;font-weight:normal;color:#000000;white-space:pre;">preflow station 2</div>
<div style="position:absolute;left:889px;top:293px;width:54px;height:20px;background:#ff8080"></div>
<div style="position:absolute;left:55px;top:292px;width:1px;height:22px;background:#d9d9d9"></div>
<div style="position:absolute;left:90px;top:292px;width:1px;height:22px;background:#d9d9d9"></div>
<div style="position:absolute;left:123px;top:292px;width:1px;height:22px;background:#d9d9d9"></div>
<div style="position:absolute;left:491px;top:292px;width:1px;height:22px;background:#d9d9d9"></div>
<div style="position:absolute;left:604px;top:292px;width:1px;height:22px;background:#d9d9d9"></div>
<div style="position:absolute;left:793px;top:292px;width:1px;height:22px;background:#d9d9d9"></div>
<div style="position:absolute;left:833px;top:292px;width:1px;height:22px;background:#d9d9d9"></div>
<div style="position:absolute;left:888px;top:292px;width:1px;height:22px;background:#d9d9d9"></div>
<div style="position:absolute;left:943px;top:292px;width:1px;height:22px;background:#d9d9d9"></div>
<div style="position:absolute;left:998px;top:292px;width:1px;height:22px;background:#d9d9d9"></div>
<div style="position:absolute;left:55px;top:313px;width:944px;height:1px;background:#d9d9d9"></div>
<div style="position:absolute;left:67px;top:296px;width:13px;height:13px;background:#fff;border:1px solid #a6a6a6"></div>
<div style="position:absolute;left:90px;top:293.0px;width:31px;text-align:right;line-height:20px;font-size:11px;font-weight:normal;color:#000000;white-space:pre;">10</div>
<div style="position:absolute;left:793px;top:293.0px;width:41px;text-align:center;line-height:20px;font-size:11px;font-weight:normal;color:#000000;white-space:pre;">15</div>
<div style="position:absolute;left:888px;top:293.0px;width:53px;text-align:right;line-height:20px;font-size:11px;font-weight:normal;color:#000000;white-space:pre;">-1967</div>
<div style="position:absolute;left:126px;top:293.0px;line-height:20px;font-size:11px;font-weight:normal;color:#000000;white-space:pre;">Replace filter cartridge</div>
<div style="position:absolute;left:495px;top:293.0px;line-height:20px;font-size:11px;font-weight:normal;color:#000000;white-space:pre;">Wartung</div>
<div style="position:absolute;left:608px;top:293.0px;line-height:20px;font-size:11px;font-weight:normal;color:#000000;white-space:pre;">preflow station 2</div>
<div style="position:absolute;left:889px;top:314px;width:54px;height:20px;background:#ff8080"></div>
<div style="position:absolute;left:944px;top:314px;width:54px;height:20px;background:#80e080"></div>
<div style="position:absolute;left:55px;top:313px;width:1px;height:22px;background:#d9d9d9"></div>
<div style="position:absolute;left:90px;top:313px;width:1px;height:22px;background:#d9d9d9"></div>
<div style="position:absolute;left:123px;top:313px;width:1px;height:22px;background:#d9d9d9"></div>
<div style="position:absolute;left:491px;top:313px;width:1px;height:22px;background:#d9d9d9"></div>
<div style="position:absolute;left:604px;top:313px;width:1px;height:22px;background:#d9d9d9"></div>
<div style="position:absolute;left:793px;top:313px;width:1px;height:22px;background:#d9d9d9"></div>
<div style="position:absolute;left:833px;top:313px;width:1px;height:22px;background:#d9d9d9"></div>
<div style="position:absolute;left:888px;top:313px;width:1px;height:22px;background:#d9d9d9"></div>
<div style="position:absolute;left:943px;top:313px;width:1px;height:22px;background:#d9d9d9"></div>
<div style="position:absolute;left:998px;top:313px;width:1px;height:22px;background:#d9d9d9"></div>
<div style="position:absolute;left:55px;top:334px;width:944px;height:1px;background:#d9d9d9"></div>
<div style="position:absolute;left:67px;top:317px;width:13px;height:13px;background:#fff;border:1px solid #a6a6a6"></div>
<div style="position:absolute;left:90px;top:314.0px;width:31px;text-align:right;line-height:20px;font-size:11px;font-weight:normal;color:#000000;white-space:pre;">37</div>
<div style="position:absolute;left:793px;top:314.0px;width:41px;text-align:center;line-height:20px;font-size:11px;font-weight:normal;color:#000000;white-space:pre;">3</div>
<div style="position:absolute;left:888px;top:314.0px;width:53px;text-align:right;line-height:20px;font-size:11px;font-weight:normal;color:#000000;white-space:pre;">-1967</div>
<div style="position:absolute;left:126px;top:314.0px;line-height:20px;font-size:11px;font-weight:normal;color:#000000;white-space:pre;">Replacing of wear parts at work-piece housing</div>
<div style="position:absolute;left:495px;top:314.0px;line-height:20px;font-size:11px;font-weight:normal;color:#000000;white-space:pre;">Austausch</div>
<div style="position:absolute;left:608px;top:314.0px;line-height:20px;font-size:11px;font-weight:normal;color:#000000;white-space:pre;"></div>
<div style="position:absolute;left:943px;top:314.0px;width:53px;text-align:right;line-height:20px;font-size:11px;font-weight:normal;color:#000000;white-space:pre;">299</div>
<div style="position:absolute;left:889px;top:335px;width:54px;height:20px;background:#ff8080"></div>
<div style="position:absolute;left:944px;top:335px;width:54px;height:20px;background:#80e080"></div>
<div style="position:absolute;left:55px;top:334px;width:1px;height:22px;background:#d9d9d9"></div>
<div style="position:absolute;left:90px;top:334px;width:1px;height:22px;background:#d9d9d9"></div>
<div style="position:absolute;left:123px;top:334px;width:1px;height:22px;background:#d9d9d9"></div>
<div style="position:absolute;left:491px;top:334px;width:1px;height:22px;background:#d9d9d9"></div>
<div style="position:absolute;left:604px;top:334px;width:1px;height:22px;background:#d9d9d9"></div>
<div style="position:absolute;left:793px;top:334px;width:1px;height:22px;background:#d9d9d9"></div>
<div style="position:absolute;left:833px;top:334px;width:1px;height:22px;background:#d9d9d9"></div>
<div style="position:absolute;left:888px;top:334px;width:1px;height:22px;background:#d9d9d9"></div>
<div style="position:absolute;left:943px;top:334px;width:1px;height:22px;background:#d9d9d9"></div>
<div style="position:absolute;left:998px;top:334px;width:1px;height:22px;background:#d9d9d9"></div>
<div style="position:absolute;left:55px;top:355px;width:944px;height:1px;background:#d9d9d9"></div>
<div style="position:absolute;left:67px;top:338px;width:13px;height:13px;background:#fff;border:1px solid #a6a6a6"></div>
<div style="position:absolute;left:90px;top:335.0px;width:31px;text-align:right;line-height:20px;font-size:11px;font-weight:normal;color:#000000;white-space:pre;">38</div>
<div style="position:absolute;left:793px;top:335.0px;width:41px;text-align:center;line-height:20px;font-size:11px;font-weight:normal;color:#000000;white-space:pre;">15</div>
<div style="position:absolute;left:888px;top:335.0px;width:53px;text-align:right;line-height:20px;font-size:11px;font-weight:normal;color:#000000;white-space:pre;">-1967</div>
<div style="position:absolute;left:126px;top:335.0px;line-height:20px;font-size:11px;font-weight:normal;color:#000000;white-space:pre;">Replacing of wear parts at suction unit laser</div>
<div style="position:absolute;left:495px;top:335.0px;line-height:20px;font-size:11px;font-weight:normal;color:#000000;white-space:pre;">Austausch</div>
<div style="position:absolute;left:608px;top:335.0px;line-height:20px;font-size:11px;font-weight:normal;color:#000000;white-space:pre;">laser</div>
<div style="position:absolute;left:943px;top:335.0px;width:53px;text-align:right;line-height:20px;font-size:11px;font-weight:normal;color:#000000;white-space:pre;">299</div>
<div style="position:absolute;left:889px;top:356px;width:54px;height:20px;background:#ff8080"></div>
<div style="position:absolute;left:944px;top:356px;width:54px;height:20px;background:#80e080"></div>
<div style="position:absolute;left:55px;top:355px;width:1px;height:22px;background:#d9d9d9"></div>
<div style="position:absolute;left:90px;top:355px;width:1px;height:22px;background:#d9d9d9"></div>
<div style="position:absolute;left:123px;top:355px;width:1px;height:22px;background:#d9d9d9"></div>
<div style="position:absolute;left:491px;top:355px;width:1px;height:22px;background:#d9d9d9"></div>
<div style="position:absolute;left:604px;top:355px;width:1px;height:22px;background:#d9d9d9"></div>
<div style="position:absolute;left:793px;top:355px;width:1px;height:22px;background:#d9d9d9"></div>
<div style="position:absolute;left:833px;top:355px;width:1px;height:22px;background:#d9d9d9"></div>
<div style="position:absolute;left:888px;top:355px;width:1px;height:22px;background:#d9d9d9"></div>
<div style="position:absolute;left:943px;top:355px;width:1px;height:22px;background:#d9d9d9"></div>
<div style="position:absolute;left:998px;top:355px;width:1px;height:22px;background:#d9d9d9"></div>
<div style="position:absolute;left:55px;top:376px;width:944px;height:1px;background:#d9d9d9"></div>
<div style="position:absolute;left:67px;top:359px;width:13px;height:13px;background:#fff;border:1px solid #a6a6a6"></div>
<div style="position:absolute;left:90px;top:356.0px;width:31px;text-align:right;line-height:20px;font-size:11px;font-weight:normal;color:#000000;white-space:pre;">39</div>
<div style="position:absolute;left:793px;top:356.0px;width:41px;text-align:center;line-height:20px;font-size:11px;font-weight:normal;color:#000000;white-space:pre;">5</div>
<div style="position:absolute;left:888px;top:356.0px;width:53px;text-align:right;line-height:20px;font-size:11px;font-weight:normal;color:#000000;white-space:pre;">-1967</div>
<div style="position:absolute;left:126px;top:356.0px;line-height:20px;font-size:11px;font-weight:normal;color:#000000;white-space:pre;">Replacing of wear part at robot</div>
<div style="position:absolute;left:495px;top:356.0px;line-height:20px;font-size:11px;font-weight:normal;color:#000000;white-space:pre;">Austausch</div>
<div style="position:absolute;left:608px;top:356.0px;line-height:20px;font-size:11px;font-weight:normal;color:#000000;white-space:pre;">infeed/out feed handling</div>
<div style="position:absolute;left:943px;top:356.0px;width:53px;text-align:right;line-height:20px;font-size:11px;font-weight:normal;color:#000000;white-space:pre;">299</div>
<div style="position:absolute;left:35px;top:376px;width:964px;height:1px;background:#d9d9d9"></div>
<svg style="left:44px;top:388px" width="1" height="1"></svg>
<svg style="left:44px;top:388px" width="7" height="7" viewBox="0 0 7 7"><path d="M6 0 V6 H0 z" fill="#606068"/></svg>
<div style="position:absolute;left:58px;top:381.0px;line-height:20px;font-size:11px;font-weight:bold;color:#1572cc;white-space:pre;letter-spacing:0.56px;-webkit-text-stroke:0.25px #1572cc">Estimated due in Dezember 2012 (Σ=5 h 15 min)</div>
<div style="position:absolute;left:55px;top:404px;width:944px;height:1px;background:#d9d9d9"></div>
<div style="position:absolute;left:834px;top:405px;width:54px;height:20px;background:#ffcb80"></div>
<div style="position:absolute;left:944px;top:405px;width:54px;height:20px;background:#80e080"></div>
<div style="position:absolute;left:55px;top:404px;width:1px;height:22px;background:#d9d9d9"></div>
<div style="position:absolute;left:90px;top:404px;width:1px;height:22px;background:#d9d9d9"></div>
<div style="position:absolute;left:123px;top:404px;width:1px;height:22px;background:#d9d9d9"></div>
<div style="position:absolute;left:491px;top:404px;width:1px;height:22px;background:#d9d9d9"></div>
<div style="position:absolute;left:604px;top:404px;width:1px;height:22px;background:#d9d9d9"></div>
<div style="position:absolute;left:793px;top:404px;width:1px;height:22px;background:#d9d9d9"></div>
<div style="position:absolute;left:833px;top:404px;width:1px;height:22px;background:#d9d9d9"></div>
<div style="position:absolute;left:888px;top:404px;width:1px;height:22px;background:#d9d9d9"></div>
<div style="position:absolute;left:943px;top:404px;width:1px;height:22px;background:#d9d9d9"></div>
<div style="position:absolute;left:998px;top:404px;width:1px;height:22px;background:#d9d9d9"></div>
<div style="position:absolute;left:55px;top:425px;width:944px;height:1px;background:#d9d9d9"></div>
<div style="position:absolute;left:67px;top:408px;width:13px;height:13px;background:#fff;border:1px solid #a6a6a6"></div>
<div style="position:absolute;left:90px;top:405.0px;width:31px;text-align:right;line-height:20px;font-size:11px;font-weight:normal;color:#000000;white-space:pre;">1</div>
<div style="position:absolute;left:793px;top:405.0px;width:41px;text-align:center;line-height:20px;font-size:11px;font-weight:normal;color:#000000;white-space:pre;">30</div>
<div style="position:absolute;left:126px;top:405.0px;line-height:20px;font-size:11px;font-weight:normal;color:#000000;white-space:pre;letter-spacing:-0.044px">Replace the set of Sealing  and the needle and seat components apprais...</div>
<div style="position:absolute;left:495px;top:405.0px;line-height:20px;font-size:11px;font-weight:normal;color:#000000;white-space:pre;">Wartung</div>
<div style="position:absolute;left:608px;top:405.0px;line-height:20px;font-size:11px;font-weight:normal;color:#000000;white-space:pre;"></div>
<div style="position:absolute;left:833px;top:405.0px;width:53px;text-align:right;line-height:20px;font-size:11px;font-weight:normal;color:#000000;white-space:pre;">2000</div>
<div style="position:absolute;left:943px;top:405.0px;width:53px;text-align:right;line-height:20px;font-size:11px;font-weight:normal;color:#000000;white-space:pre;">999</div>
<div style="position:absolute;left:834px;top:426px;width:54px;height:20px;background:#80e080"></div>
<div style="position:absolute;left:944px;top:426px;width:54px;height:20px;background:#80e080"></div>
<div style="position:absolute;left:55px;top:425px;width:1px;height:22px;background:#d9d9d9"></div>
<div style="position:absolute;left:90px;top:425px;width:1px;height:22px;background:#d9d9d9"></div>
<div style="position:absolute;left:123px;top:425px;width:1px;height:22px;background:#d9d9d9"></div>
<div style="position:absolute;left:491px;top:425px;width:1px;height:22px;background:#d9d9d9"></div>
<div style="position:absolute;left:604px;top:425px;width:1px;height:22px;background:#d9d9d9"></div>
<div style="position:absolute;left:793px;top:425px;width:1px;height:22px;background:#d9d9d9"></div>
<div style="position:absolute;left:833px;top:425px;width:1px;height:22px;background:#d9d9d9"></div>
<div style="position:absolute;left:888px;top:425px;width:1px;height:22px;background:#d9d9d9"></div>
<div style="position:absolute;left:943px;top:425px;width:1px;height:22px;background:#d9d9d9"></div>
<div style="position:absolute;left:998px;top:425px;width:1px;height:22px;background:#d9d9d9"></div>
<div style="position:absolute;left:55px;top:446px;width:944px;height:1px;background:#d9d9d9"></div>
<div style="position:absolute;left:67px;top:429px;width:13px;height:13px;background:#fff;border:1px solid #a6a6a6"></div>
<div style="position:absolute;left:90px;top:426.0px;width:31px;text-align:right;line-height:20px;font-size:11px;font-weight:normal;color:#000000;white-space:pre;">12</div>
<div style="position:absolute;left:793px;top:426.0px;width:41px;text-align:center;line-height:20px;font-size:11px;font-weight:normal;color:#000000;white-space:pre;">15</div>
<div style="position:absolute;left:126px;top:426.0px;line-height:20px;font-size:11px;font-weight:normal;color:#000000;white-space:pre;">Replace filter cartridge</div>
<div style="position:absolute;left:495px;top:426.0px;line-height:20px;font-size:11px;font-weight:normal;color:#000000;white-space:pre;">Wartung</div>
<div style="position:absolute;left:608px;top:426.0px;line-height:20px;font-size:11px;font-weight:normal;color:#000000;white-space:pre;">grinding station 3</div>
<div style="position:absolute;left:833px;top:426.0px;width:53px;text-align:right;line-height:20px;font-size:11px;font-weight:normal;color:#000000;white-space:pre;">2000</div>
<div style="position:absolute;left:943px;top:426.0px;width:53px;text-align:right;line-height:20px;font-size:11px;font-weight:normal;color:#000000;white-space:pre;">599</div>
<div style="position:absolute;left:834px;top:447px;width:54px;height:20px;background:#ffcb80"></div>
<div style="position:absolute;left:944px;top:447px;width:54px;height:20px;background:#80e080"></div>
<div style="position:absolute;left:55px;top:446px;width:1px;height:22px;background:#d9d9d9"></div>
<div style="position:absolute;left:90px;top:446px;width:1px;height:22px;background:#d9d9d9"></div>
<div style="position:absolute;left:123px;top:446px;width:1px;height:22px;background:#d9d9d9"></div>
<div style="position:absolute;left:491px;top:446px;width:1px;height:22px;background:#d9d9d9"></div>
<div style="position:absolute;left:604px;top:446px;width:1px;height:22px;background:#d9d9d9"></div>
<div style="position:absolute;left:793px;top:446px;width:1px;height:22px;background:#d9d9d9"></div>
<div style="position:absolute;left:833px;top:446px;width:1px;height:22px;background:#d9d9d9"></div>
<div style="position:absolute;left:888px;top:446px;width:1px;height:22px;background:#d9d9d9"></div>
<div style="position:absolute;left:943px;top:446px;width:1px;height:22px;background:#d9d9d9"></div>
<div style="position:absolute;left:998px;top:446px;width:1px;height:22px;background:#d9d9d9"></div>
<div style="position:absolute;left:55px;top:467px;width:944px;height:1px;background:#d9d9d9"></div>
<div style="position:absolute;left:67px;top:450px;width:13px;height:13px;background:#fff;border:1px solid #a6a6a6"></div>
<div style="position:absolute;left:90px;top:447.0px;width:31px;text-align:right;line-height:20px;font-size:11px;font-weight:normal;color:#000000;white-space:pre;">13</div>
<div style="position:absolute;left:793px;top:447.0px;width:41px;text-align:center;line-height:20px;font-size:11px;font-weight:normal;color:#000000;white-space:pre;">90</div>
<div style="position:absolute;left:126px;top:447.0px;line-height:20px;font-size:11px;font-weight:normal;color:#000000;white-space:pre;">Pump overhaul, renew kit of spare parts</div>
<div style="position:absolute;left:495px;top:447.0px;line-height:20px;font-size:11px;font-weight:normal;color:#000000;white-space:pre;">Wartung</div>
<div style="position:absolute;left:608px;top:447.0px;line-height:20px;font-size:11px;font-weight:normal;color:#000000;white-space:pre;">grinding station 3</div>
<div style="position:absolute;left:833px;top:447.0px;width:53px;text-align:right;line-height:20px;font-size:11px;font-weight:normal;color:#000000;white-space:pre;">2000</div>
<div style="position:absolute;left:943px;top:447.0px;width:53px;text-align:right;line-height:20px;font-size:11px;font-weight:normal;color:#000000;white-space:pre;">599</div>
<div style="position:absolute;left:834px;top:468px;width:54px;height:20px;background:#80e080"></div>
<div style="position:absolute;left:944px;top:468px;width:54px;height:20px;background:#80e080"></div>
<div style="position:absolute;left:55px;top:467px;width:1px;height:22px;background:#d9d9d9"></div>
<div style="position:absolute;left:90px;top:467px;width:1px;height:22px;background:#d9d9d9"></div>
<div style="position:absolute;left:123px;top:467px;width:1px;height:22px;background:#d9d9d9"></div>
<div style="position:absolute;left:491px;top:467px;width:1px;height:22px;background:#d9d9d9"></div>
<div style="position:absolute;left:604px;top:467px;width:1px;height:22px;background:#d9d9d9"></div>
<div style="position:absolute;left:793px;top:467px;width:1px;height:22px;background:#d9d9d9"></div>
<div style="position:absolute;left:833px;top:467px;width:1px;height:22px;background:#d9d9d9"></div>
<div style="position:absolute;left:888px;top:467px;width:1px;height:22px;background:#d9d9d9"></div>
<div style="position:absolute;left:943px;top:467px;width:1px;height:22px;background:#d9d9d9"></div>
<div style="position:absolute;left:998px;top:467px;width:1px;height:22px;background:#d9d9d9"></div>
<div style="position:absolute;left:55px;top:488px;width:944px;height:1px;background:#d9d9d9"></div>
<div style="position:absolute;left:67px;top:471px;width:13px;height:13px;background:#fff;border:1px solid #a6a6a6"></div>
<div style="position:absolute;left:90px;top:468.0px;width:31px;text-align:right;line-height:20px;font-size:11px;font-weight:normal;color:#000000;white-space:pre;">17</div>
<div style="position:absolute;left:793px;top:468.0px;width:41px;text-align:center;line-height:20px;font-size:11px;font-weight:normal;color:#000000;white-space:pre;">180</div>
<div style="position:absolute;left:126px;top:468.0px;line-height:20px;font-size:11px;font-weight:normal;color:#000000;white-space:pre;">Replace all components of spare part kit</div>
<div style="position:absolute;left:495px;top:468.0px;line-height:20px;font-size:11px;font-weight:normal;color:#000000;white-space:pre;">Austausch</div>
<div style="position:absolute;left:608px;top:468.0px;line-height:20px;font-size:11px;font-weight:normal;color:#000000;white-space:pre;">grinding station 3</div>
<div style="position:absolute;left:833px;top:468.0px;width:53px;text-align:right;line-height:20px;font-size:11px;font-weight:normal;color:#000000;white-space:pre;">2000</div>
<div style="position:absolute;left:943px;top:468.0px;width:53px;text-align:right;line-height:20px;font-size:11px;font-weight:normal;color:#000000;white-space:pre;">599</div>
<div style="position:absolute;left:35px;top:488px;width:964px;height:1px;background:#d9d9d9"></div>
<svg style="left:44px;top:500px" width="1" height="1"></svg>
<svg style="left:44px;top:500px" width="7" height="7" viewBox="0 0 7 7"><path d="M6 0 V6 H0 z" fill="#606068"/></svg>
<div style="position:absolute;left:58px;top:493.0px;line-height:20px;font-size:11px;font-weight:bold;color:#1572cc;white-space:pre;letter-spacing:0.56px;-webkit-text-stroke:0.25px #1572cc">Estimated due in Januar 2013 (Σ=2 h 5 min)</div>
<div style="position:absolute;left:55px;top:516px;width:944px;height:1px;background:#d9d9d9"></div>
<div style="position:absolute;left:889px;top:517px;width:54px;height:20px;background:#ffcb80"></div>
<div style="position:absolute;left:55px;top:516px;width:1px;height:22px;background:#d9d9d9"></div>
<div style="position:absolute;left:90px;top:516px;width:1px;height:22px;background:#d9d9d9"></div>
<div style="position:absolute;left:123px;top:516px;width:1px;height:22px;background:#d9d9d9"></div>
<div style="position:absolute;left:491px;top:516px;width:1px;height:22px;background:#d9d9d9"></div>
<div style="position:absolute;left:604px;top:516px;width:1px;height:22px;background:#d9d9d9"></div>
<div style="position:absolute;left:793px;top:516px;width:1px;height:22px;background:#d9d9d9"></div>
<div style="position:absolute;left:833px;top:516px;width:1px;height:22px;background:#d9d9d9"></div>
<div style="position:absolute;left:888px;top:516px;width:1px;height:22px;background:#d9d9d9"></div>
<div style="position:absolute;left:943px;top:516px;width:1px;height:22px;background:#d9d9d9"></div>
<div style="position:absolute;left:998px;top:516px;width:1px;height:22px;background:#d9d9d9"></div>
<div style="position:absolute;left:55px;top:537px;width:944px;height:1px;background:#d9d9d9"></div>
<div style="position:absolute;left:67px;top:520px;width:13px;height:13px;background:#fff;border:1px solid #a6a6a6"></div>
<svg style="left:67px;top:520px" width="13" height="13" viewBox="0 0 13 13"><path d="M2.2 5 L2.4 7.6 L5 10 L10.8 4 L10.6 1.6 L5 7.4 z" fill="#333"/></svg>
<div style="position:absolute;left:90px;top:517.0px;width:31px;text-align:right;line-height:20px;font-size:11px;font-weight:normal;color:#000000;white-space:pre;">6</div>
<div style="position:absolute;left:793px;top:517.0px;width:41px;text-align:center;line-height:20px;font-size:11px;font-weight:normal;color:#000000;white-space:pre;">30</div>
<div style="position:absolute;left:888px;top:517.0px;width:53px;text-align:right;line-height:20px;font-size:11px;font-weight:normal;color:#000000;white-space:pre;">1033</div>
<div style="position:absolute;left:126px;top:517.0px;line-height:20px;font-size:11px;font-weight:normal;color:#000000;white-space:pre;">Valve overhaul, renew kit of spare parts</div>
<div style="position:absolute;left:495px;top:517.0px;line-height:20px;font-size:11px;font-weight:normal;color:#000000;white-space:pre;">Wartung</div>
<div style="position:absolute;left:608px;top:517.0px;line-height:20px;font-size:11px;font-weight:normal;color:#000000;white-space:pre;">preflow station 2</div>
<div style="position:absolute;left:889px;top:538px;width:54px;height:20px;background:#ffcb80"></div>
<div style="position:absolute;left:55px;top:537px;width:1px;height:22px;background:#d9d9d9"></div>
<div style="position:absolute;left:90px;top:537px;width:1px;height:22px;background:#d9d9d9"></div>
<div style="position:absolute;left:123px;top:537px;width:1px;height:22px;background:#d9d9d9"></div>
<div style="position:absolute;left:491px;top:537px;width:1px;height:22px;background:#d9d9d9"></div>
<div style="position:absolute;left:604px;top:537px;width:1px;height:22px;background:#d9d9d9"></div>
<div style="position:absolute;left:793px;top:537px;width:1px;height:22px;background:#d9d9d9"></div>
<div style="position:absolute;left:833px;top:537px;width:1px;height:22px;background:#d9d9d9"></div>
<div style="position:absolute;left:888px;top:537px;width:1px;height:22px;background:#d9d9d9"></div>
<div style="position:absolute;left:943px;top:537px;width:1px;height:22px;background:#d9d9d9"></div>
<div style="position:absolute;left:998px;top:537px;width:1px;height:22px;background:#d9d9d9"></div>
<div style="position:absolute;left:55px;top:558px;width:944px;height:1px;background:#d9d9d9"></div>
<div style="position:absolute;left:67px;top:541px;width:13px;height:13px;background:#fff;border:1px solid #a6a6a6"></div>
<div style="position:absolute;left:90px;top:538.0px;width:31px;text-align:right;line-height:20px;font-size:11px;font-weight:normal;color:#000000;white-space:pre;">11</div>
<div style="position:absolute;left:793px;top:538.0px;width:41px;text-align:center;line-height:20px;font-size:11px;font-weight:normal;color:#000000;white-space:pre;">15</div>
<div style="position:absolute;left:888px;top:538.0px;width:53px;text-align:right;line-height:20px;font-size:11px;font-weight:normal;color:#000000;white-space:pre;">1033</div>
<div style="position:absolute;left:126px;top:538.0px;line-height:20px;font-size:11px;font-weight:normal;color:#000000;white-space:pre;">Replace valve</div>
<div style="position:absolute;left:495px;top:538.0px;line-height:20px;font-size:11px;font-weight:normal;color:#000000;white-space:pre;">Wartung</div>
<div style="position:absolute;left:608px;top:538.0px;line-height:20px;font-size:11px;font-weight:normal;color:#000000;white-space:pre;">preflow station 2</div>
<div style="position:absolute;left:889px;top:559px;width:54px;height:20px;background:#ffcb80"></div>
<div style="position:absolute;left:944px;top:559px;width:54px;height:20px;background:#80e080"></div>
<div style="position:absolute;left:55px;top:558px;width:1px;height:22px;background:#d9d9d9"></div>
<div style="position:absolute;left:90px;top:558px;width:1px;height:22px;background:#d9d9d9"></div>
<div style="position:absolute;left:123px;top:558px;width:1px;height:22px;background:#d9d9d9"></div>
<div style="position:absolute;left:491px;top:558px;width:1px;height:22px;background:#d9d9d9"></div>
<div style="position:absolute;left:604px;top:558px;width:1px;height:22px;background:#d9d9d9"></div>
<div style="position:absolute;left:793px;top:558px;width:1px;height:22px;background:#d9d9d9"></div>
<div style="position:absolute;left:833px;top:558px;width:1px;height:22px;background:#d9d9d9"></div>
<div style="position:absolute;left:888px;top:558px;width:1px;height:22px;background:#d9d9d9"></div>
<div style="position:absolute;left:943px;top:558px;width:1px;height:22px;background:#d9d9d9"></div>
<div style="position:absolute;left:998px;top:558px;width:1px;height:22px;background:#d9d9d9"></div>
<div style="position:absolute;left:55px;top:579px;width:944px;height:1px;background:#d9d9d9"></div>
<div style="position:absolute;left:67px;top:562px;width:13px;height:13px;background:#fff;border:1px solid #a6a6a6"></div>
<div style="position:absolute;left:90px;top:559.0px;width:31px;text-align:right;line-height:20px;font-size:11px;font-weight:normal;color:#000000;white-space:pre;">31</div>
<div style="position:absolute;left:793px;top:559.0px;width:41px;text-align:center;line-height:20px;font-size:11px;font-weight:normal;color:#000000;white-space:pre;">5</div>
<div style="position:absolute;left:888px;top:559.0px;width:53px;text-align:right;line-height:20px;font-size:11px;font-weight:normal;color:#000000;white-space:pre;">1033</div>
<div style="position:absolute;left:126px;top:559.0px;line-height:20px;font-size:11px;font-weight:normal;color:#000000;white-space:pre;letter-spacing:0.036px">Replacing of wear parts at contact head (down) and lifter at measuring ...</div>
<div style="position:absolute;left:495px;top:559.0px;line-height:20px;font-size:11px;font-weight:normal;color:#000000;white-space:pre;">Austausch</div>
<div style="position:absolute;left:608px;top:559.0px;line-height:20px;font-size:11px;font-weight:normal;color:#000000;white-space:pre;">measuring station 2</div>
<div style="position:absolute;left:943px;top:559.0px;width:53px;text-align:right;line-height:20px;font-size:11px;font-weight:normal;color:#000000;white-space:pre;">1999</div>
<div style="position:absolute;left:889px;top:580px;width:54px;height:20px;background:#ffcb80"></div>
<div style="position:absolute;left:944px;top:580px;width:54px;height:20px;background:#80e080"></div>
<div style="position:absolute;left:55px;top:579px;width:1px;height:22px;background:#d9d9d9"></div>
<div style="position:absolute;left:90px;top:579px;width:1px;height:22px;background:#d9d9d9"></div>
<div style="position:absolute;left:123px;top:579px;width:1px;height:22px;background:#d9d9d9"></div>
<div style="position:absolute;left:491px;top:579px;width:1px;height:22px;background:#d9d9d9"></div>
<div style="position:absolute;left:604px;top:579px;width:1px;height:22px;background:#d9d9d9"></div>
<div style="position:absolute;left:793px;top:579px;width:1px;height:22px;background:#d9d9d9"></div>
<div style="position:absolute;left:833px;top:579px;width:1px;height:22px;background:#d9d9d9"></div>
<div style="position:absolute;left:888px;top:579px;width:1px;height:22px;background:#d9d9d9"></div>
<div style="position:absolute;left:943px;top:579px;width:1px;height:22px;background:#d9d9d9"></div>
<div style="position:absolute;left:998px;top:579px;width:1px;height:22px;background:#d9d9d9"></div>
<div style="position:absolute;left:55px;top:600px;width:944px;height:1px;background:#d9d9d9"></div>
<div style="position:absolute;left:67px;top:583px;width:13px;height:13px;background:#fff;border:1px solid #a6a6a6"></div>
<div style="position:absolute;left:90px;top:580.0px;width:31px;text-align:right;line-height:20px;font-size:11px;font-weight:normal;color:#000000;white-space:pre;">32</div>
<div style="position:absolute;left:793px;top:580.0px;width:41px;text-align:center;line-height:20px;font-size:11px;font-weight:normal;color:#000000;white-space:pre;">30</div>
<div style="position:absolute;left:888px;top:580.0px;width:53px;text-align:right;line-height:20px;font-size:11px;font-weight:normal;color:#000000;white-space:pre;">1033</div>
<div style="position:absolute;left:126px;top:580.0px;line-height:20px;font-size:11px;font-weight:normal;color:#000000;white-space:pre;">Valve overhaul, renew kit of spare parts</div>
<div style="position:absolute;left:495px;top:580.0px;line-height:20px;font-size:11px;font-weight:normal;color:#000000;white-space:pre;">Austausch</div>
<div style="position:absolute;left:608px;top:580.0px;line-height:20px;font-size:11px;font-weight:normal;color:#000000;white-space:pre;">measuring station 2</div>
<div style="position:absolute;left:943px;top:580.0px;width:53px;text-align:right;line-height:20px;font-size:11px;font-weight:normal;color:#000000;white-space:pre;">1999</div>
<div style="position:absolute;left:889px;top:601px;width:54px;height:20px;background:#ffcb80"></div>
<div style="position:absolute;left:944px;top:601px;width:54px;height:20px;background:#80e080"></div>
<div style="position:absolute;left:55px;top:600px;width:1px;height:22px;background:#d9d9d9"></div>
<div style="position:absolute;left:90px;top:600px;width:1px;height:22px;background:#d9d9d9"></div>
<div style="position:absolute;left:123px;top:600px;width:1px;height:22px;background:#d9d9d9"></div>
<div style="position:absolute;left:491px;top:600px;width:1px;height:22px;background:#d9d9d9"></div>
<div style="position:absolute;left:604px;top:600px;width:1px;height:22px;background:#d9d9d9"></div>
<div style="position:absolute;left:793px;top:600px;width:1px;height:22px;background:#d9d9d9"></div>
<div style="position:absolute;left:833px;top:600px;width:1px;height:22px;background:#d9d9d9"></div>
<div style="position:absolute;left:888px;top:600px;width:1px;height:22px;background:#d9d9d9"></div>
<div style="position:absolute;left:943px;top:600px;width:1px;height:22px;background:#d9d9d9"></div>
<div style="position:absolute;left:998px;top:600px;width:1px;height:22px;background:#d9d9d9"></div>
<div style="position:absolute;left:55px;top:621px;width:944px;height:1px;background:#d9d9d9"></div>
<div style="position:absolute;left:67px;top:604px;width:13px;height:13px;background:#fff;border:1px solid #a6a6a6"></div>
<div style="position:absolute;left:90px;top:601.0px;width:31px;text-align:right;line-height:20px;font-size:11px;font-weight:normal;color:#000000;white-space:pre;">33</div>
<div style="position:absolute;left:793px;top:601.0px;width:41px;text-align:center;line-height:20px;font-size:11px;font-weight:normal;color:#000000;white-space:pre;">30</div>
<div style="position:absolute;left:888px;top:601.0px;width:53px;text-align:right;line-height:20px;font-size:11px;font-weight:normal;color:#000000;white-space:pre;">1033</div>
<div style="position:absolute;left:126px;top:601.0px;line-height:20px;font-size:11px;font-weight:normal;color:#000000;white-space:pre;">Valve overhaul, renew kit of spare parts</div>
<div style="position:absolute;left:495px;top:601.0px;line-height:20px;font-size:11px;font-weight:normal;color:#000000;white-space:pre;">Austausch</div>
<div style="position:absolute;left:608px;top:601.0px;line-height:20px;font-size:11px;font-weight:normal;color:#000000;white-space:pre;">measuring station 7</div>
<div style="position:absolute;left:943px;top:601.0px;width:53px;text-align:right;line-height:20px;font-size:11px;font-weight:normal;color:#000000;white-space:pre;">1999</div>
<div style="position:absolute;left:889px;top:622px;width:54px;height:20px;background:#ffcb80"></div>
<div style="position:absolute;left:944px;top:622px;width:54px;height:20px;background:#80e080"></div>
<div style="position:absolute;left:55px;top:621px;width:1px;height:22px;background:#d9d9d9"></div>
<div style="position:absolute;left:90px;top:621px;width:1px;height:22px;background:#d9d9d9"></div>
<div style="position:absolute;left:123px;top:621px;width:1px;height:22px;background:#d9d9d9"></div>
<div style="position:absolute;left:491px;top:621px;width:1px;height:22px;background:#d9d9d9"></div>
<div style="position:absolute;left:604px;top:621px;width:1px;height:22px;background:#d9d9d9"></div>
<div style="position:absolute;left:793px;top:621px;width:1px;height:22px;background:#d9d9d9"></div>
<div style="position:absolute;left:833px;top:621px;width:1px;height:22px;background:#d9d9d9"></div>
<div style="position:absolute;left:888px;top:621px;width:1px;height:22px;background:#d9d9d9"></div>
<div style="position:absolute;left:943px;top:621px;width:1px;height:22px;background:#d9d9d9"></div>
<div style="position:absolute;left:998px;top:621px;width:1px;height:22px;background:#d9d9d9"></div>
<div style="position:absolute;left:55px;top:642px;width:944px;height:1px;background:#d9d9d9"></div>
<div style="position:absolute;left:67px;top:625px;width:13px;height:13px;background:#fff;border:1px solid #a6a6a6"></div>
<div style="position:absolute;left:90px;top:622.0px;width:31px;text-align:right;line-height:20px;font-size:11px;font-weight:normal;color:#000000;white-space:pre;">34</div>
<div style="position:absolute;left:793px;top:622.0px;width:41px;text-align:center;line-height:20px;font-size:11px;font-weight:normal;color:#000000;white-space:pre;">5</div>
<div style="position:absolute;left:888px;top:622.0px;width:53px;text-align:right;line-height:20px;font-size:11px;font-weight:normal;color:#000000;white-space:pre;">1033</div>
<div style="position:absolute;left:126px;top:622.0px;line-height:20px;font-size:11px;font-weight:normal;color:#000000;white-space:pre;letter-spacing:0.06px">Replacing of wear parts at contact head (down) and lifter at flushing/blo...</div>
<div style="position:absolute;left:495px;top:622.0px;line-height:20px;font-size:11px;font-weight:normal;color:#000000;white-space:pre;">Austausch</div>
<div style="position:absolute;left:608px;top:622.0px;line-height:20px;font-size:11px;font-weight:normal;color:#000000;white-space:pre;">flushing/blowout station 4</div>
<div style="position:absolute;left:943px;top:622.0px;width:53px;text-align:right;line-height:20px;font-size:11px;font-weight:normal;color:#000000;white-space:pre;">1999</div>
<div style="position:absolute;left:889px;top:643px;width:54px;height:20px;background:#ffcb80"></div>
<div style="position:absolute;left:944px;top:643px;width:54px;height:20px;background:#80e080"></div>
<div style="position:absolute;left:55px;top:642px;width:1px;height:22px;background:#d9d9d9"></div>
<div style="position:absolute;left:90px;top:642px;width:1px;height:22px;background:#d9d9d9"></div>
<div style="position:absolute;left:123px;top:642px;width:1px;height:22px;background:#d9d9d9"></div>
<div style="position:absolute;left:491px;top:642px;width:1px;height:22px;background:#d9d9d9"></div>
<div style="position:absolute;left:604px;top:642px;width:1px;height:22px;background:#d9d9d9"></div>
<div style="position:absolute;left:793px;top:642px;width:1px;height:22px;background:#d9d9d9"></div>
<div style="position:absolute;left:833px;top:642px;width:1px;height:22px;background:#d9d9d9"></div>
<div style="position:absolute;left:888px;top:642px;width:1px;height:22px;background:#d9d9d9"></div>
<div style="position:absolute;left:943px;top:642px;width:1px;height:22px;background:#d9d9d9"></div>
<div style="position:absolute;left:998px;top:642px;width:1px;height:22px;background:#d9d9d9"></div>
<div style="position:absolute;left:55px;top:663px;width:944px;height:1px;background:#d9d9d9"></div>
<div style="position:absolute;left:67px;top:646px;width:13px;height:13px;background:#fff;border:1px solid #a6a6a6"></div>
<div style="position:absolute;left:90px;top:643.0px;width:31px;text-align:right;line-height:20px;font-size:11px;font-weight:normal;color:#000000;white-space:pre;">35</div>
<div style="position:absolute;left:793px;top:643.0px;width:41px;text-align:center;line-height:20px;font-size:11px;font-weight:normal;color:#000000;white-space:pre;">5</div>
<div style="position:absolute;left:888px;top:643.0px;width:53px;text-align:right;line-height:20px;font-size:11px;font-weight:normal;color:#000000;white-space:pre;">1033</div>
<div style="position:absolute;left:126px;top:643.0px;line-height:20px;font-size:11px;font-weight:normal;color:#000000;white-space:pre;letter-spacing:0.06px">Replacing of wear parts at contact head (down) and lifter at flushing/blo...</div>
<div style="position:absolute;left:495px;top:643.0px;line-height:20px;font-size:11px;font-weight:normal;color:#000000;white-space:pre;">Austausch</div>
<div style="position:absolute;left:608px;top:643.0px;line-height:20px;font-size:11px;font-weight:normal;color:#000000;white-space:pre;">flushing/blowout station 6</div>
<div style="position:absolute;left:943px;top:643.0px;width:53px;text-align:right;line-height:20px;font-size:11px;font-weight:normal;color:#000000;white-space:pre;">1999</div>
<div style="position:absolute;left:889px;top:664px;width:54px;height:20px;background:#ffcb80"></div>
<div style="position:absolute;left:944px;top:664px;width:54px;height:20px;background:#80e080"></div>
<div style="position:absolute;left:55px;top:663px;width:1px;height:22px;background:#d9d9d9"></div>
<div style="position:absolute;left:90px;top:663px;width:1px;height:22px;background:#d9d9d9"></div>
<div style="position:absolute;left:123px;top:663px;width:1px;height:22px;background:#d9d9d9"></div>
<div style="position:absolute;left:491px;top:663px;width:1px;height:22px;background:#d9d9d9"></div>
<div style="position:absolute;left:604px;top:663px;width:1px;height:22px;background:#d9d9d9"></div>
<div style="position:absolute;left:793px;top:663px;width:1px;height:22px;background:#d9d9d9"></div>
<div style="position:absolute;left:833px;top:663px;width:1px;height:22px;background:#d9d9d9"></div>
<div style="position:absolute;left:888px;top:663px;width:1px;height:22px;background:#d9d9d9"></div>
<div style="position:absolute;left:943px;top:663px;width:1px;height:22px;background:#d9d9d9"></div>
<div style="position:absolute;left:998px;top:663px;width:1px;height:22px;background:#d9d9d9"></div>
<div style="position:absolute;left:55px;top:684px;width:944px;height:1px;background:#d9d9d9"></div>
<div style="position:absolute;left:67px;top:667px;width:13px;height:13px;background:#fff;border:1px solid #a6a6a6"></div>
<div style="position:absolute;left:90px;top:664.0px;width:31px;text-align:right;line-height:20px;font-size:11px;font-weight:normal;color:#000000;white-space:pre;">36</div>
<div style="position:absolute;left:793px;top:664.0px;width:41px;text-align:center;line-height:20px;font-size:11px;font-weight:normal;color:#000000;white-space:pre;">5</div>
<div style="position:absolute;left:888px;top:664.0px;width:53px;text-align:right;line-height:20px;font-size:11px;font-weight:normal;color:#000000;white-space:pre;">1033</div>
<div style="position:absolute;left:126px;top:664.0px;line-height:20px;font-size:11px;font-weight:normal;color:#000000;white-space:pre;letter-spacing:0.06px">Replacing of wear parts at contact head (down) and lifter at flushing/blo...</div>
<div style="position:absolute;left:495px;top:664.0px;line-height:20px;font-size:11px;font-weight:normal;color:#000000;white-space:pre;">Austausch</div>
<div style="position:absolute;left:608px;top:664.0px;line-height:20px;font-size:11px;font-weight:normal;color:#000000;white-space:pre;">flushing/blowout station 8</div>
<div style="position:absolute;left:943px;top:664.0px;width:53px;text-align:right;line-height:20px;font-size:11px;font-weight:normal;color:#000000;white-space:pre;">1999</div>
<div style="position:absolute;left:35px;top:684px;width:964px;height:1px;background:#d9d9d9"></div>
<svg style="left:44px;top:696px" width="1" height="1"></svg>
<svg style="left:44px;top:696px" width="7" height="7" viewBox="0 0 7 7"><path d="M6 0 V6 H0 z" fill="#606068"/></svg>
<div style="position:absolute;left:58px;top:689.0px;line-height:20px;font-size:11px;font-weight:bold;color:#1572cc;white-space:pre;letter-spacing:0.56px;-webkit-text-stroke:0.25px #1572cc">Estimated due in Juli 2013 (Σ=4 h 30 min)</div>
<div style="position:absolute;left:55px;top:712px;width:944px;height:1px;background:#d9d9d9"></div>
<div style="position:absolute;left:889px;top:713px;width:54px;height:20px;background:#80e080"></div>
<div style="position:absolute;left:944px;top:713px;width:54px;height:20px;background:#80e080"></div>
<div style="position:absolute;left:55px;top:712px;width:1px;height:22px;background:#d9d9d9"></div>
<div style="position:absolute;left:90px;top:712px;width:1px;height:22px;background:#d9d9d9"></div>
<div style="position:absolute;left:123px;top:712px;width:1px;height:22px;background:#d9d9d9"></div>
<div style="position:absolute;left:491px;top:712px;width:1px;height:22px;background:#d9d9d9"></div>
<div style="position:absolute;left:604px;top:712px;width:1px;height:22px;background:#d9d9d9"></div>
<div style="position:absolute;left:793px;top:712px;width:1px;height:22px;background:#d9d9d9"></div>
<div style="position:absolute;left:833px;top:712px;width:1px;height:22px;background:#d9d9d9"></div>
<div style="position:absolute;left:888px;top:712px;width:1px;height:22px;background:#d9d9d9"></div>
<div style="position:absolute;left:943px;top:712px;width:1px;height:22px;background:#d9d9d9"></div>
<div style="position:absolute;left:998px;top:712px;width:1px;height:22px;background:#d9d9d9"></div>
<div style="position:absolute;left:55px;top:733px;width:944px;height:1px;background:#d9d9d9"></div>
<div style="position:absolute;left:67px;top:716px;width:13px;height:13px;background:#fff;border:1px solid #a6a6a6"></div>
<div style="position:absolute;left:90px;top:713.0px;width:31px;text-align:right;line-height:20px;font-size:11px;font-weight:normal;color:#000000;white-space:pre;">20</div>
<div style="position:absolute;left:793px;top:713.0px;width:41px;text-align:center;line-height:20px;font-size:11px;font-weight:normal;color:#000000;white-space:pre;">30</div>
<div style="position:absolute;left:888px;top:713.0px;width:53px;text-align:right;line-height:20px;font-size:11px;font-weight:normal;color:#000000;white-space:pre;">5033</div>
<div style="position:absolute;left:126px;top:713.0px;line-height:20px;font-size:11px;font-weight:normal;color:#000000;white-space:pre;">Valve overhaul, renew kit of spare parts</div>
<div style="position:absolute;left:495px;top:713.0px;line-height:20px;font-size:11px;font-weight:normal;color:#000000;white-space:pre;">Wartung</div>
<div style="position:absolute;left:608px;top:713.0px;line-height:20px;font-size:11px;font-weight:normal;color:#000000;white-space:pre;">flushing station 6</div>
<div style="position:absolute;left:943px;top:713.0px;width:53px;text-align:right;line-height:20px;font-size:11px;font-weight:normal;color:#000000;white-space:pre;">599</div>
</div>
<div style="position:absolute;left:7px;top:723px;width:1010px;height:1px;background:#d6d0ca"></div>
<svg style="left:468px;top:683px" width="14" height="22" viewBox="0 0 14 22">
<path d="M0.5 0.5 L0.5 16 L4 12.8 L6.9 18.6 L9.2 17.6 L6.6 12 L11.3 12 z" fill="#fff" stroke="#1a1a28" stroke-width="1.1" stroke-linejoin="miter"/>
</svg>
<div style="position:absolute;left:0px;top:724px;width:1024px;height:27px;background:#0072c6"></div>
<div style="position:absolute;left:0px;top:751px;width:1024px;height:1px;background:#5a5a5a"></div>
<div style="position:absolute;left:0px;top:724px;width:1px;height:28px;background:#5a5a5a"></div>
<div style="position:absolute;left:1023px;top:724px;width:1px;height:28px;background:#5a5a5a"></div>
<div style="position:absolute;left:19px;top:728.0px;line-height:20px;font-size:10.8px;font-weight:normal;color:#ffffff;white-space:pre;">Machine cycle:</div>
<div style="position:absolute;left:103px;top:728.0px;line-height:20px;font-size:14px;font-weight:bold;color:#ffff3c;white-space:pre;">298000</div>
<div style="position:absolute;left:164px;top:729px;width:1px;height:18px;background:#ffffff"></div>
<div style="position:absolute;left:179px;top:728.0px;line-height:20px;font-size:11px;font-weight:normal;color:#ffffff;white-space:pre;">Operating hours:</div>
<div style="position:absolute;left:273px;top:728.0px;line-height:20px;font-size:14px;font-weight:bold;color:#ffff3c;white-space:pre;">4967</div>
<div style="position:absolute;left:319px;top:729px;width:1px;height:18px;background:#ffffff"></div>
<div style="position:absolute;left:327px;top:728.0px;line-height:20px;font-size:11.1px;font-weight:normal;color:#ffffff;white-space:pre;">Current user:</div>
<div style="position:absolute;left:405px;top:738px;width:4px;height:1px;background:#e8f040"></div>
<div style="position:absolute;left:410px;top:738px;width:4px;height:1px;background:#e8f040"></div>
<div style="position:absolute;left:415px;top:738px;width:4px;height:1px;background:#e8f040"></div>
<div style="position:absolute;left:426px;top:729px;width:1px;height:18px;background:#ffffff"></div>
<div style="position:absolute;left:773px;top:728.0px;line-height:20px;font-size:10.9px;font-weight:normal;color:#ffffff;white-space:pre;">10 tasks selected,</div>
<div style="position:absolute;left:872px;top:728.0px;line-height:20px;font-size:10.95px;font-weight:normal;color:#ffffff;white-space:pre;">total duration 9 h 38 min</div>
<div style="position:absolute;left:1014px;top:735px;width:2px;height:2px;background:#e8d2b0"></div>
<div style="position:absolute;left:1011px;top:738px;width:2px;height:2px;background:#e8d2b0"></div>
<div style="position:absolute;left:1014px;top:738px;width:2px;height:2px;background:#e8d2b0"></div>
<div style="position:absolute;left:1008px;top:741px;width:2px;height:2px;background:#e8d2b0"></div>
<div style="position:absolute;left:1011px;top:741px;width:2px;height:2px;background:#e8d2b0"></div>
<div style="position:absolute;left:1014px;top:741px;width:2px;height:2px;background:#e8d2b0"></div>
</body></html>
